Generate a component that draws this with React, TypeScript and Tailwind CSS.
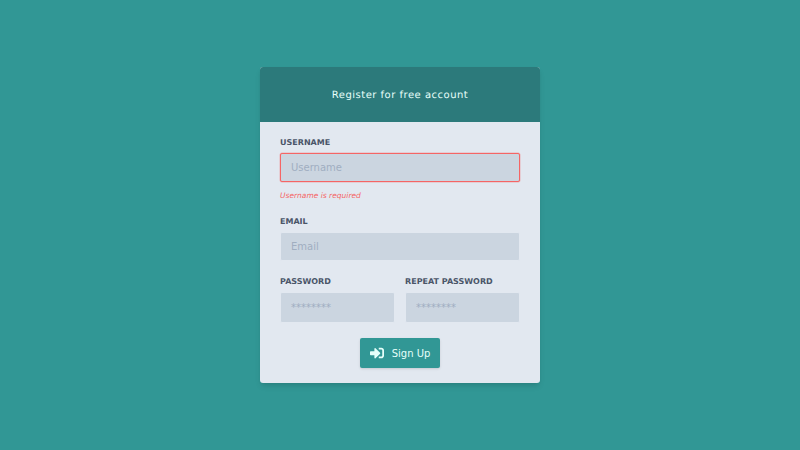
import { FaSignInAlt } from 'react-icons/fa';

const font = 'font-["DejaVu_Sans",sans-serif] [text-rendering:geometricPrecision]';

function Field({ label, placeholder, error, tall }: { label: string; placeholder: string; error?: boolean; tall?: boolean }) {
  return (
    <div className="flex flex-col">
      <label className="mb-[5px] text-[8px] leading-[10px] font-bold text-[#4a5568] uppercase">{label}</label>
      <input
        type="text"
        placeholder={placeholder}
        readOnly
        className={`w-full ${tall ? 'h-[31px]' : 'h-[29px]'} rounded-[2px] bg-[#cbd5e0] px-[10px] text-[10px] outline-none placeholder:text-[#a0aec0] border ${error ? 'border-[#f56565] shadow-[0_0_0_0.5px_#f5656566]' : 'border-[#e2e8f0]'}`}
      />
    </div>
  );
}

export default function App() {
  return (
    <div className={`${font} flex h-screen w-full items-center justify-center bg-[#319795]`}>
      <div className="w-[280px] h-[316px] overflow-hidden rounded-[3px] bg-[#e2e8f0] shadow-md">
        <div className="flex h-[55px] items-center justify-center bg-[#2c7a7b] pt-[1px] text-[10px] tracking-[0.5px] text-[#e6fffa]">
          Register for free account
        </div>
        <div className="flex flex-col px-[20px] pt-[16px]">
          <Field label="Username" placeholder="Username" error />
          <p className="mt-[9px] text-[7.5px] leading-[10px] text-[#f56565] italic">Username is required</p>
          <div className="mt-[16px]">
            <Field label="Email" placeholder="Email" />
          </div>
          <div className="mt-[16px] grid grid-cols-2 gap-[10px]">
            <Field label="Password" placeholder="********" tall />
            <Field label="Repeat Password" placeholder="********" tall />
          </div>
          <button className="mx-auto mt-[15px] flex h-[30px] w-[80px] items-center justify-center gap-[8px] rounded-[2px] bg-[#319795] text-[10px] text-[#e6fffa] shadow-sm">
            <FaSignInAlt className="text-[14px]" />
            Sign Up
          </button>
        </div>
      </div>
    </div>
  );
}
